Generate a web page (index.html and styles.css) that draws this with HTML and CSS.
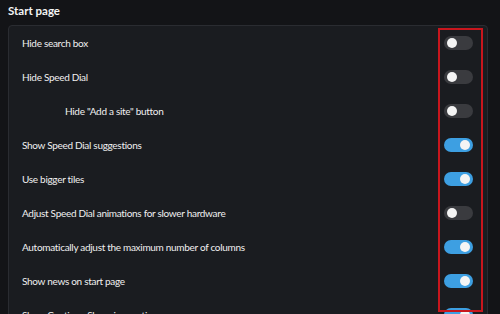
FILE: index.html
```html
<!DOCTYPE html>
<html>
<head>
  <title>Start page</title>
  <link rel="stylesheet" href="styles.css">
</head>
<body>
  <div class="page">
    <h2 class="title">Start page</h2>
    <div class="card">
      <div class="row"><span>Hide search box</span><span class="toggle"></span></div>
      <div class="row"><span>Hide Speed Dial</span><span class="toggle"></span></div>
      <div class="row sub"><span>Hide "Add a site" button</span><span class="toggle"></span></div>
      <div class="row"><span>Show Speed Dial suggestions</span><span class="toggle on"></span></div>
      <div class="row"><span>Use bigger tiles</span><span class="toggle on"></span></div>
      <div class="row"><span>Adjust Speed Dial animations for slower hardware</span><span class="toggle"></span></div>
      <div class="row"><span>Automatically adjust the maximum number of columns</span><span class="toggle on"></span></div>
      <div class="row"><span>Show news on start page</span><span class="toggle on"></span></div>
      <div class="row"><span>Show Continue Shopping section</span><span class="toggle on"></span></div>
    </div>
    <div class="highlight"></div>
  </div>
</body>
</html>
```

FILE: styles.css
```css
body {
  margin: 0;
  background-color: #131417;
  font-family: "Lato", "Noto Sans", sans-serif;
  color: #f0f0f0;
  overflow: hidden;
  height: 314px;
}

.page {
  position: relative;
  padding: 0 12px 0 8px;
}

.title {
  margin: 0;
  padding-top: 4px;
  height: 21px;
  font-size: 11.5px;
  font-weight: bold;
  color: #f4f4f4;
}

.card {
  background-color: #1a1c20;
  border: 1px solid #2a2c31;
  border-radius: 4px;
  padding: 0 14px 0 13px;
}

.row {
  display: flex;
  align-items: center;
  justify-content: space-between;
  height: 34px;
  font-size: 10px;
  letter-spacing: -0.3px;
}

.row.sub {
  padding-left: 43px;
}

.toggle {
  position: relative;
  width: 29px;
  height: 14px;
  border-radius: 7px;
  background-color: #3a3b3f;
}

.toggle::after {
  content: "";
  position: absolute;
  top: 2px;
  left: 3px;
  width: 10px;
  height: 10px;
  border-radius: 50%;
  background-color: #f4f4f4;
}

.toggle.on {
  background-color: #3d9fe2;
}

.toggle.on::after {
  left: 16px;
}

.highlight {
  position: absolute;
  left: 438px;
  top: 28px;
  width: 41px;
  height: 280px;
  border: 2px solid #c8161d;
}
```
